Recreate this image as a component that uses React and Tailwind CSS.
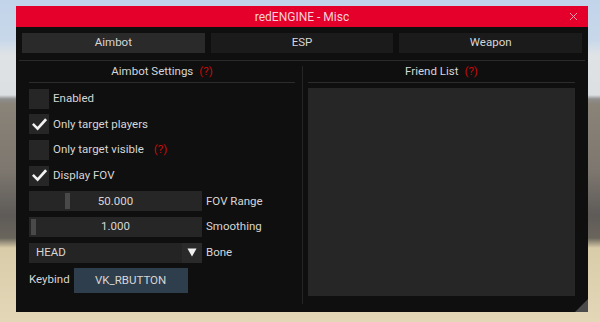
import { X } from 'lucide-react';

const Help = () => <span className="ml-[6px] text-[#c80a0a]">(?)</span>;

function Check({ checked, label, help }) {
  return (
    <div className="flex h-[20px] items-center gap-[4px]">
      <div className="flex h-[20px] w-[20px] items-center justify-center bg-[#262626]">
        {checked && (
          <svg width="15" height="13" viewBox="0 0 15 13" fill="none">
            <path d="M1.8 6.8 L5.6 10.6 L13.2 2.2" stroke="#f2f2f2" strokeWidth="2.6" strokeLinecap="square" />
          </svg>
        )}
      </div>
      <span>{label}</span>
      {help && <Help />}
    </div>
  );
}

function Slider({ value, grab, label }) {
  return (
    <div className="flex h-[20px] items-center gap-[4px]">
      <div className="relative flex h-[20px] w-[173px] items-center justify-center bg-[#262626]">
        <div className="absolute top-[2px] h-[16px] w-[5px] bg-[#494949]" style={{ left: grab }} />
        <span className="relative">{value}</span>
      </div>
      <span>{label}</span>
    </div>
  );
}

function Header({ title }) {
  return (
    <div className="flex h-[22px] items-center justify-center border-b border-[#2c2c2c] pt-[1px]">
      <span>{title}</span>
      <Help />
    </div>
  );
}

export default function App() {
  return (
    <div className="h-[322px] w-[600px] overflow-hidden bg-[linear-gradient(to_bottom,#c2d4ea_0px,#c8d8ea_40px,#dfe3e6_55px,#dcdfe1_95px,#8f8f8f_99px,#8a8378_104px,#7d776f_170px,#5e5b58_215px,#6a655c_238px,#d9cca9_248px,#e3d7b8_322px)] pl-[16px] pt-[6px] font-['Roboto',sans-serif] text-[11.5px] text-[#d6d6d6]">
      <div className="relative flex h-[306px] w-[572px] flex-col bg-[#0f0f0f]">
        {/* title bar */}
        <div className="relative flex h-[21px] items-center justify-center bg-[#e4002b] text-[12px] text-[#f8d2d9]">
          redENGINE - Misc
          <X className="absolute right-[8px] top-[4px] text-[#f3b6c1]" size={13} strokeWidth={1.6} />
        </div>

        {/* tabs */}
        <div className="mt-[6px] flex h-[20px] gap-[6px] px-[6px]">
          <div className="flex flex-1 items-center justify-center bg-[#2a2a2a]">Aimbot</div>
          <div className="flex flex-1 items-center justify-center bg-[#1b1b1b]">ESP</div>
          <div className="flex flex-1 items-center justify-center bg-[#1b1b1b]">Weapon</div>
        </div>
        <div className="mx-[3px] mt-[7px] h-px bg-[#2a2a2a]" />

        {/* content */}
        <div className="flex flex-1 px-[13px] pb-[8px]">
          <div className="flex w-[266px] flex-col">
            <Header title="Aimbot Settings" />
            <div className="mt-[5.5px] flex flex-col gap-[5.7px]">
              <Check label="Enabled" />
              <Check checked label="Only target players" />
              <Check label="Only target visible" help />
              <Check checked label="Display FOV" />
              <Slider value="50.000" grab={36} label="FOV Range" />
              <Slider value="1.000" grab={1.5} label="Smoothing" />
              <div className="flex h-[20px] items-center gap-[4px]">
                <div className="flex h-[20px] w-[173px]">
                  <div className="flex flex-1 items-center bg-[#242424] pl-[7px]">HEAD</div>
                  <div className="flex w-[20px] items-center justify-center bg-[#2a2a2a]">
                    <svg width="10" height="9" viewBox="0 0 10 9">
                      <path d="M0.5 0.5 H9.5 L5 8.5 Z" fill="#f2f2f2" />
                    </svg>
                  </div>
                </div>
                <span>Bone</span>
              </div>
              <div className="flex items-start gap-[4px]">
                <span className="pt-[3px]">Keybind</span>
                <div className="flex h-[25px] w-[114px] items-center justify-center bg-[#2f3e4d]">VK_RBUTTON</div>
              </div>
            </div>
          </div>

          <div className="ml-[7px] mt-[5px] w-px bg-[#252525]" />

          <div className="ml-[5px] flex w-[267px] flex-col">
            <Header title="Friend List" />
            <div className="mt-[5px] h-[208px] bg-[#262626]" />
          </div>
        </div>

        {/* resize grip */}
        <svg className="absolute bottom-0 right-0" width="13" height="13" viewBox="0 0 13 13">
          <path d="M13 0 V13 H0 Z" fill="#4b4b4b" />
        </svg>
      </div>
    </div>
  );
}
